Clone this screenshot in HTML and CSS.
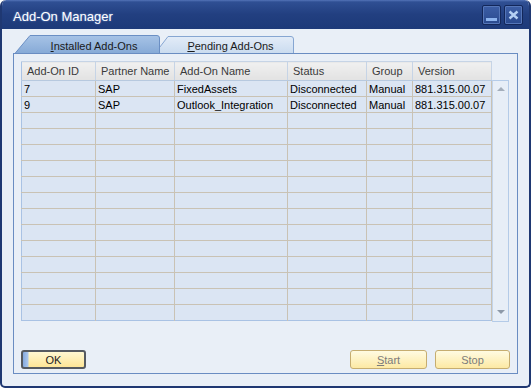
FILE: index.html
```html
<!DOCTYPE html>
<html lang="en">
<head>
    <meta charset="UTF-8">
    <title>Add-On Manager</title>
    <link rel="stylesheet" href="styles.css">
</head>
<body>
    <div class="window">
        <div class="titlebar">
            <span class="title">Add-On Manager</span>
            <div class="title-buttons">
                <div class="tbtn"><span class="min-bar"></span></div>
                <div class="tbtn">
                    <svg width="11" height="10" viewBox="0 0 11 10">
                        <path d="M1.5 1.5 L9.5 8.5 M9.5 1.5 L1.5 8.5" stroke="#b4d0f4" stroke-width="2.4" fill="none"/>
                    </svg>
                </div>
            </div>
        </div>

        <div class="content">
            <div class="tabs">
                <div class="tab tab-active">
                    <svg class="tab-shape" width="147" height="19" viewBox="0 0 147 19">
                        <defs>
                            <linearGradient id="ga" x1="0" y1="0" x2="0" y2="1">
                                <stop offset="0" stop-color="#a7c3e6"/>
                                <stop offset="1" stop-color="#85a9d6"/>
                            </linearGradient>
                        </defs>
                        <path d="M0.5 19 L16 0.5 L143 0.5 Q145.5 0.5 145.5 3 L145.5 19" fill="url(#ga)" stroke="#6b8fc4"/>
                    </svg>
                    <span class="tab-label"><u>I</u>nstalled Add-Ons</span>
                </div>
                <div class="tab tab-other">
                    <svg class="tab-shape" width="141" height="18" viewBox="0 0 141 18">
                        <defs>
                            <linearGradient id="gb" x1="0" y1="0" x2="0" y2="1">
                                <stop offset="0" stop-color="#e3ecf8"/>
                                <stop offset="1" stop-color="#c9dbef"/>
                            </linearGradient>
                        </defs>
                        <path d="M0.5 18 L14 0.5 L137 0.5 Q139.5 0.5 139.5 3 L139.5 18" fill="url(#gb)" stroke="#86a6d2"/>
                    </svg>
                    <span class="tab-label"><u>P</u>ending Add-Ons</span>
                </div>
            </div>

            <div class="panel">
                <div class="grid">
                    <table class="matrix">
                        <colgroup>
                            <col style="width: 74px">
                            <col style="width: 79px">
                            <col style="width: 113px">
                            <col style="width: 79px">
                            <col style="width: 46px">
                            <col style="width: 79px">
                        </colgroup>
                        <thead>
                            <tr>
                                <th>Add-On ID</th>
                                <th>Partner Name</th>
                                <th>Add-On Name</th>
                                <th>Status</th>
                                <th>Group</th>
                                <th>Version</th>
                            </tr>
                        </thead>
                        <tbody>
                            <tr><td>7</td><td>SAP</td><td>FixedAssets</td><td>Disconnected</td><td>Manual</td><td>881.315.00.07</td></tr>
                            <tr><td>9</td><td>SAP</td><td>Outlook_Integration</td><td>Disconnected</td><td>Manual</td><td>881.315.00.07</td></tr>
                            <tr><td></td><td></td><td></td><td></td><td></td><td></td></tr>
                            <tr><td></td><td></td><td></td><td></td><td></td><td></td></tr>
                            <tr><td></td><td></td><td></td><td></td><td></td><td></td></tr>
                            <tr><td></td><td></td><td></td><td></td><td></td><td></td></tr>
                            <tr><td></td><td></td><td></td><td></td><td></td><td></td></tr>
                            <tr><td></td><td></td><td></td><td></td><td></td><td></td></tr>
                            <tr><td></td><td></td><td></td><td></td><td></td><td></td></tr>
                            <tr><td></td><td></td><td></td><td></td><td></td><td></td></tr>
                            <tr><td></td><td></td><td></td><td></td><td></td><td></td></tr>
                            <tr><td></td><td></td><td></td><td></td><td></td><td></td></tr>
                            <tr><td></td><td></td><td></td><td></td><td></td><td></td></tr>
                            <tr><td></td><td></td><td></td><td></td><td></td><td></td></tr>
                            <tr><td></td><td></td><td></td><td></td><td></td><td></td></tr>
                        </tbody>
                    </table>
                    <div class="scrollbar">
                        <span class="arrow-up"></span>
                        <span class="arrow-down"></span>
                    </div>
                </div>

                <div class="actions">
                    <button class="btn btn-ok">OK</button>
                    <div class="spacer"></div>
                    <button class="btn btn-start"><u>S</u>tart</button>
                    <button class="btn btn-stop">Stop</button>
                </div>
            </div>
        </div>
    </div>
</body>
</html>
```

FILE: styles.css
```css
body {
    margin: 0;
    background: #fff;
    font-family: "Liberation Sans", Arial, sans-serif;
}

.window {
    width: 531px;
    height: 388px;
    box-sizing: border-box;
    background: #e9eff7;
    border: 2px solid #1f3872;
    border-top: none;
    border-radius: 6px 6px 5px 5px;
    overflow: hidden;
}

.titlebar {
    height: 29px;
    margin: 0 -2px;
    display: flex;
    align-items: center;
    justify-content: space-between;
    padding: 0 8px 0 13px;
    background: linear-gradient(#5474b8 0, #2f4f93 2px, #223f80 50%, #1d3a79 100%);
    border-radius: 6px 6px 0 0;
}

.title {
    color: #fff;
    font-size: 13px;
    text-shadow: 0 0 2px rgba(170, 200, 255, 0.6);
    margin-top: 4px;
}

.title-buttons {
    display: flex;
    gap: 3px;
}

.tbtn {
    width: 17px;
    height: 18px;
    border: 1px solid #13275a;
    border-radius: 2px;
    background: linear-gradient(#3c5ea6, #2a4a8f);
    box-shadow: inset 0 0 0 1px #5576b8;
    display: flex;
    align-items: center;
    justify-content: center;
}

.min-bar {
    width: 11px;
    height: 3px;
    background: #8db4ee;
    margin-top: 9px;
}

.content {
    padding: 7px 0 0 11px;
}

.tabs {
    display: flex;
    height: 18px;
    margin-left: 1px;
}

.tab {
    position: relative;
    height: 18px;
    font-size: 11px;
    color: #1a1a1a;
    display: flex;
    align-items: center;
    justify-content: center;
}

.tab-shape {
    position: absolute;
    left: 0;
    bottom: 0;
}

.tab-label {
    position: relative;
    margin-top: 1px;
}

.tab-active {
    width: 146px;
    padding-left: 14px;
    box-sizing: border-box;
    z-index: 2;
}

.tab-other {
    width: 140px;
    margin-left: -6px;
    padding-left: 13px;
    box-sizing: border-box;
    z-index: 1;
}

.panel {
    width: 505px;
    height: 321px;
    box-sizing: border-box;
    border: 1px solid #6a8dc2;
    margin-top: -1px;
    position: relative;
    z-index: 3;
    background: #e9eff7;
    padding: 7px 7px 4px 7px;
    display: flex;
    flex-direction: column;
}

.grid {
    display: flex;
    align-items: flex-start;
}

.matrix {
    border-collapse: collapse;
    table-layout: fixed;
    width: 471px;
    flex-shrink: 0;
    font-size: 11px;
    border-left: 1px solid #a9c2e4;
    border-bottom: 1px solid #a9c2e4;
}

.matrix th {
    height: 18px;
    padding: 0 0 0 5px;
    text-align: left;
    font-weight: normal;
    color: #3a3a3a;
    background: linear-gradient(#f0f0f0, #e2e2e2);
    border-right: 1px solid #c6d4e6;
    border-bottom: 1px solid #b7c9df;
    border-top: 1px solid #c6d4e6;
    white-space: nowrap;
    overflow: hidden;
}

.matrix td {
    height: 15px;
    padding: 0 0 0 2px;
    background: #dbe5f3;
    color: #000;
    border-right: 1px solid #c9c2b4;
    border-bottom: 1px solid #c9c2b4;
    white-space: nowrap;
    overflow: hidden;
}

.matrix tr:last-child td {
    border-bottom: none;
}

.scrollbar {
    width: 15px;
    height: 240px;
    flex-shrink: 0;
    margin-top: 19px;
    background: #e7eef7;
    border: 1px solid #b4cbe8;
    border-left: 1px solid #c2d4eb;
    position: relative;
}

.arrow-up,
.arrow-down {
    position: absolute;
    left: 4px;
    width: 0;
    height: 0;
    border-left: 4px solid transparent;
    border-right: 4px solid transparent;
}

.arrow-up {
    top: 6px;
    border-bottom: 4px solid #a4aebb;
}

.arrow-down {
    bottom: 7px;
    border-top: 4px solid #8e99a8;
}

.actions {
    display: flex;
    gap: 8px;
    margin-top: auto;
}

.spacer {
    flex: 1;
}

.btn {
    height: 19px;
    font-family: "Liberation Sans", Arial, sans-serif;
    font-size: 11px;
    padding: 0;
    border-radius: 3px;
    cursor: pointer;
}

.btn-ok {
    width: 65px;
    border: 2px solid #555a60;
    color: #222;
    background: linear-gradient(to right, #85aade 0, #aac6ec 5px, transparent 6px),
                linear-gradient(#fff8d2, #fde596);
}

.btn-start,
.btn-stop {
    border: 1px solid #c6ad70;
    color: #7c7c7c;
    background: linear-gradient(#fffbe2, #fde9a4);
}

.btn-start {
    width: 77px;
}

.btn-stop {
    width: 75px;
}
```
